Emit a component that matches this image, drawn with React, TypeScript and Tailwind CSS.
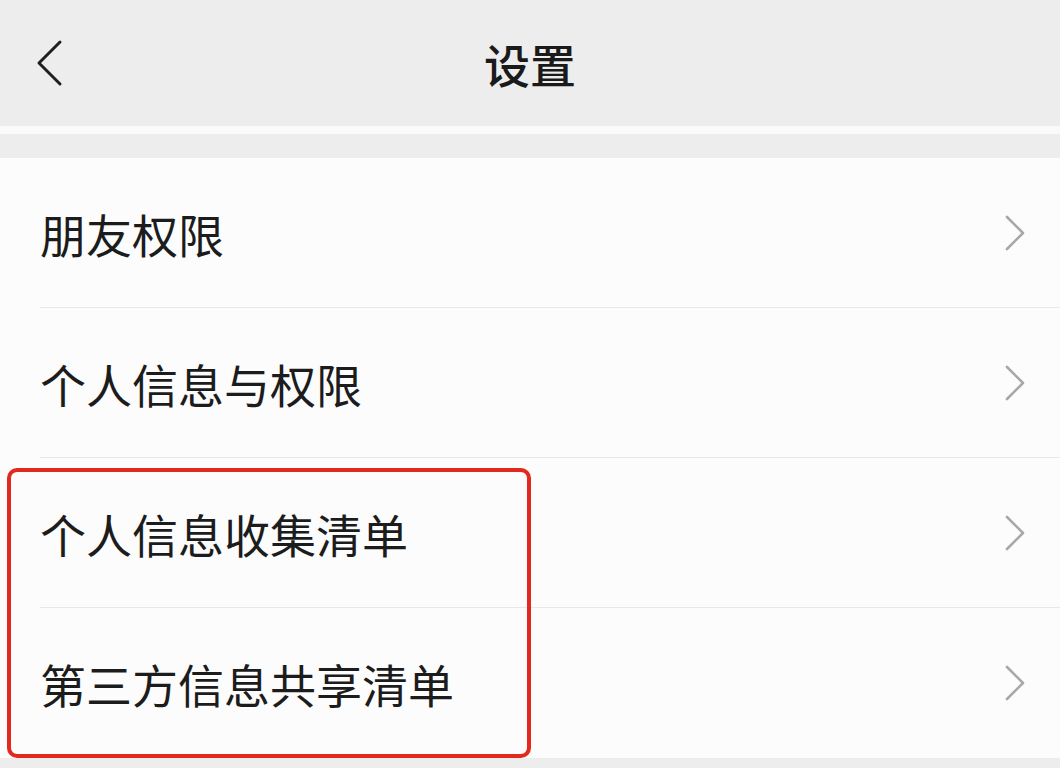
const FONT = '"Noto Sans CJK SC", "Noto Sans", sans-serif';

const ROWS = [
  { label: '朋友权限' },
  { label: '个人信息与权限' },
  { label: '个人信息收集清单' },
  { label: '第三方信息共享清单' },
];

function BackIcon() {
  return (
    <svg width="28" height="48" viewBox="0 0 28 48" fill="none">
      <path d="M25 3L4 24l21 21" stroke="#1f1f1f" strokeWidth="3" strokeLinecap="round" strokeLinejoin="round" />
    </svg>
  );
}

function Chevron() {
  return (
    <svg width="22" height="36" viewBox="0 0 22 36" fill="none">
      <path d="M3 2l16 16L3 34" stroke="#a8a8a8" strokeWidth="2.6" strokeLinecap="round" strokeLinejoin="round" />
    </svg>
  );
}

function Row({ label, last }: { label: string; last?: boolean }) {
  return (
    <div className="relative h-[150px] flex items-center pl-10 pr-[34px]">
      <span className="flex-1 text-[46px] leading-none text-[#1c1c1c]">{label}</span>
      <Chevron />
      {!last && <div className="absolute left-10 right-0 bottom-0 h-px bg-[#e8e8e8]" />}
    </div>
  );
}

export default function App() {
  return (
    <div className="w-[1060px] h-[768px] bg-[#ededed] overflow-hidden" style={{ fontFamily: FONT }}>
      <header className="relative h-[126px] flex items-center justify-center">
        <div className="absolute left-[35px] top-[39px]">
          <BackIcon />
        </div>
        <h1 className="text-[46px] font-medium text-[#1a1a1a] leading-none">设置</h1>
      </header>
      <div className="h-[8px] bg-[#fafafa]" />
      <div className="h-[24px]" />
      <div className="relative bg-[#fcfcfc]">
        {ROWS.map((r, i) => (
          <Row key={r.label} label={r.label} last={i === ROWS.length - 1} />
        ))}
        {/* red highlight around the last two rows */}
        <div className="absolute left-[7px] top-[310px] w-[524px] h-[290px] border-[4px] border-[#e3281d] rounded-[10px] pointer-events-none" />
      </div>
    </div>
  );
}
